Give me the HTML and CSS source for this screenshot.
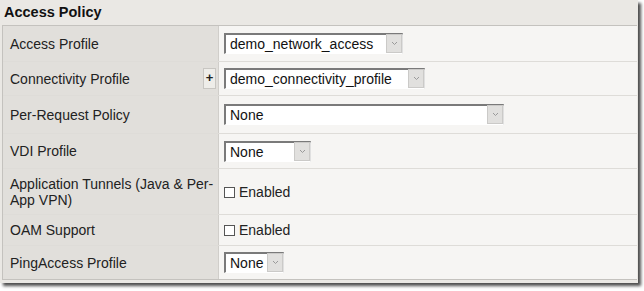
FILE: index.html
```html
<!DOCTYPE html>
<html>
<head>
<meta charset="utf-8">
<link rel="stylesheet" href="styles.css">
</head>
<body>
<div class="frame">
  <div class="title">Access Policy</div>
  <div class="table">
    <div class="row r1">
      <div class="label">Access Profile</div>
      <div class="value"><div class="sel w-access"><span class="txt">demo_network_access</span><span class="arrow"><svg width="7" height="5" viewBox="0 0 7 5"><path d="M1 1 L3.5 3.5 L6 1" fill="none" stroke="#9a9a9a" stroke-width="1"/></svg></span></div></div>
    </div>
    <div class="row r2">
      <div class="label"><span>Connectivity Profile</span><span class="plus">+</span></div>
      <div class="value"><div class="sel w-conn"><span class="txt">demo_connectivity_profile</span><span class="arrow"><svg width="7" height="5" viewBox="0 0 7 5"><path d="M1 1 L3.5 3.5 L6 1" fill="none" stroke="#9a9a9a" stroke-width="1"/></svg></span></div></div>
    </div>
    <div class="row r3">
      <div class="label">Per-Request Policy</div>
      <div class="value"><div class="sel w-req"><span class="txt">None</span><span class="arrow"><svg width="7" height="5" viewBox="0 0 7 5"><path d="M1 1 L3.5 3.5 L6 1" fill="none" stroke="#9a9a9a" stroke-width="1"/></svg></span></div></div>
    </div>
    <div class="row r4">
      <div class="label">VDI Profile</div>
      <div class="value"><div class="sel w-vdi"><span class="txt">None</span><span class="arrow"><svg width="7" height="5" viewBox="0 0 7 5"><path d="M1 1 L3.5 3.5 L6 1" fill="none" stroke="#9a9a9a" stroke-width="1"/></svg></span></div></div>
    </div>
    <div class="row r5">
      <div class="label">Application Tunnels (Java &amp; Per-App VPN)</div>
      <div class="value"><span class="cb"></span><span class="cbl">Enabled</span></div>
    </div>
    <div class="row r6">
      <div class="label">OAM Support</div>
      <div class="value"><span class="cb"></span><span class="cbl">Enabled</span></div>
    </div>
    <div class="row r7">
      <div class="label">PingAccess Profile</div>
      <div class="value"><div class="sel w-ping"><span class="txt">None</span><span class="arrow"><svg width="7" height="5" viewBox="0 0 7 5"><path d="M1 1 L3.5 3.5 L6 1" fill="none" stroke="#9a9a9a" stroke-width="1"/></svg></span></div></div>
    </div>
  </div>
</div>
</body>
</html>
```
FILE: styles.css
```css
html, body {
  margin: 0;
  padding: 0;
  background: #ffffff;
}
body {
  font-family: "Liberation Sans", Arial, sans-serif;
  color: #222;
  width: 644px;
  height: 291px;
  overflow: hidden;
}
.frame {
  width: 638px;
  height: 283px;
  background: #eae8e4;
  box-shadow: 3px 3px 3px rgba(0, 0, 0, 0.7);
  box-sizing: border-box;
  padding: 0 0 0 2px;
}
.title {
  font-weight: bold;
  font-size: 14.5px;
  height: 25px;
  line-height: 24px;
  padding-left: 2px;
  color: #111;
}
.table {
  border-top: 1px solid #c4c2be;
  border-left: 1px solid #c4c2be;
  border-bottom: 1px solid #c4c2be;
  width: 635px;
  box-sizing: border-box;
}
.row {
  display: grid;
  grid-template-columns: 216px 1fr;
  border-bottom: 1px solid #dedcd8;
}
.row:last-child {
  border-bottom: none;
}
.label {
  background: #e1dfdb;
  border-right: 1px solid #d0ceca;
  font-size: 14px;
  padding-left: 7px;
  display: flex;
  align-items: center;
  justify-content: space-between;
  line-height: 16px;
  padding-right: 2px;
}
.value {
  background: #f6f5f3;
  display: flex;
  align-items: center;
  padding-left: 5px;
  font-size: 14px;
}
.r1 { height: 35px; }
.r2 { height: 33px; }
.r3 { height: 37px; }
.r4 { height: 34px; }
.r5 { height: 45px; }
.r6 { height: 30px; }
.r7 { height: 33px; }
.r5 .label { padding-right: 0; }
.plus {
  display: inline-block;
  width: 11px;
  height: 19px;
  border: 1px solid #c8c6c2;
  background: #eeede9;
  font-size: 13px;
  font-weight: bold;
  line-height: 18px;
  text-align: center;
  color: #222;
}
.sel {
  display: flex;
  height: 21px;
  box-sizing: border-box;
  background: #fff;
  border-top: 2px solid #7a7a7a;
  border-left: 2px solid #7a7a7a;
  border-right: 1px solid #e0e0e0;
  border-bottom: 1px solid #ffffff;
  font-size: 14px;
}
.sel .txt {
  flex: 1;
  padding-left: 4px;
  line-height: 18px;
  color: #111;
  white-space: nowrap;
}
.sel .arrow {
  width: 14px;
  background: #e1e0de;
  border: 1px solid #cbcac8;
  margin-top: -1px;
  display: flex;
  align-items: center;
  justify-content: center;
}
.w-access { width: 179px; }
.w-conn { width: 201px; }
.w-req { width: 280px; }
.w-vdi { width: 87px; }
.w-ping { width: 60px; }
.cb {
  width: 9px;
  height: 9px;
  border: 1px solid #555;
  background: #fff;
  margin-right: 4px;
  margin-top: 1px;
}
.cbl {
  color: #222;
}
```
